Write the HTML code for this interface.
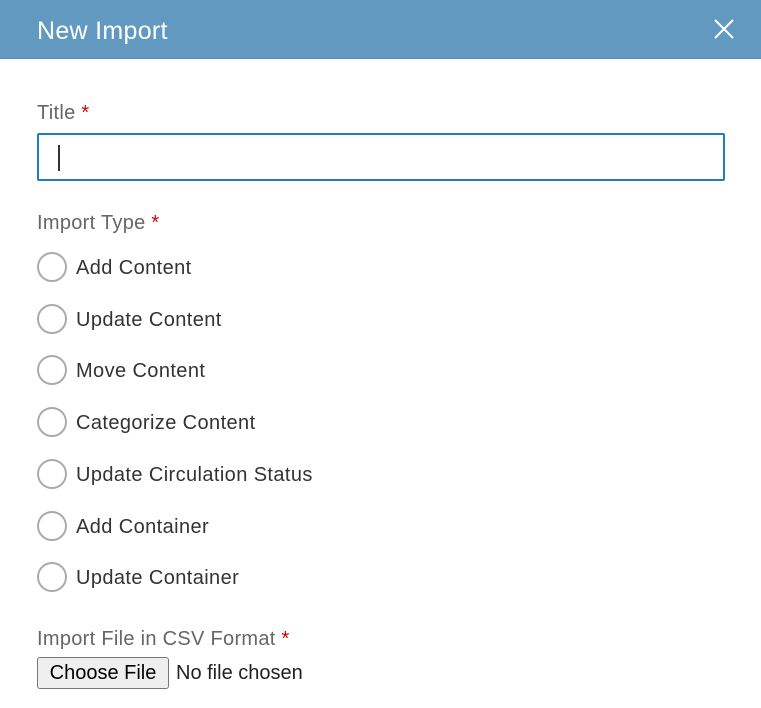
<!DOCTYPE html>
<html><head><style>
*{margin:0;padding:0;box-sizing:border-box}
body{width:761px;height:708px;background:#fff;font-family:"Liberation Sans",sans-serif;position:relative;overflow:hidden}
.hdr{position:absolute;left:0;top:0;width:761px;height:59px;background:#6199c0;border-bottom:1px solid #5a8fb5}
.hdr .t{position:absolute;left:37px;top:17px;color:#fff;font-size:25px;letter-spacing:0.3px}
.x{position:absolute;left:714px;top:19px}
.lbl{position:absolute;left:37px;color:#666;font-size:20px;letter-spacing:0.3px}
.lbl b{color:#c00;font-weight:normal}
.inp{position:absolute;left:37px;top:133px;width:688px;height:48px;border:2px solid #1f7ad0;border-radius:2px}
.cur{position:absolute;left:19px;top:10px;width:2px;height:26px;background:#333}
.r{position:absolute;left:37px;height:30px}
.r i{position:absolute;left:0;top:0;width:30px;height:30px;border:2px solid #aaa;border-radius:50%}
.r span{position:absolute;left:39px;top:5px;font-size:20px;color:#333;white-space:nowrap;letter-spacing:0.4px}
.btn{position:absolute;left:37px;top:657px;width:132px;height:32px;background:#efefef;border:1px solid #777;border-radius:3px;font-size:20px;color:#000;text-align:center;line-height:30px}
.nf{position:absolute;left:176px;top:662px;font-size:20px;color:#222}
</style></head><body>
<div class="hdr"><div class="t">New Import</div>
<svg class="x" width="20" height="20" viewBox="0 0 20 20"><path d="M1 1L19 19M19 1L1 19" stroke="#fff" stroke-width="2"/></svg></div>
<div class="lbl" style="top:102px">Title <b>*</b></div>
<div class="inp"><div class="cur"></div></div>
<div class="lbl" style="top:212px">Import Type <b>*</b></div>
<div class="r" style="top:252px"><i></i><span>Add Content</span></div>
<div class="r" style="top:304px"><i></i><span>Update Content</span></div>
<div class="r" style="top:355px"><i></i><span>Move Content</span></div>
<div class="r" style="top:407px"><i></i><span>Categorize Content</span></div>
<div class="r" style="top:459px"><i></i><span>Update Circulation Status</span></div>
<div class="r" style="top:511px"><i></i><span>Add Container</span></div>
<div class="r" style="top:562px"><i></i><span>Update Container</span></div>
<div class="lbl" style="top:628px">Import File in CSV Format <b>*</b></div>
<div class="btn">Choose File</div>
<div class="nf">No file chosen</div>
</body></html>
